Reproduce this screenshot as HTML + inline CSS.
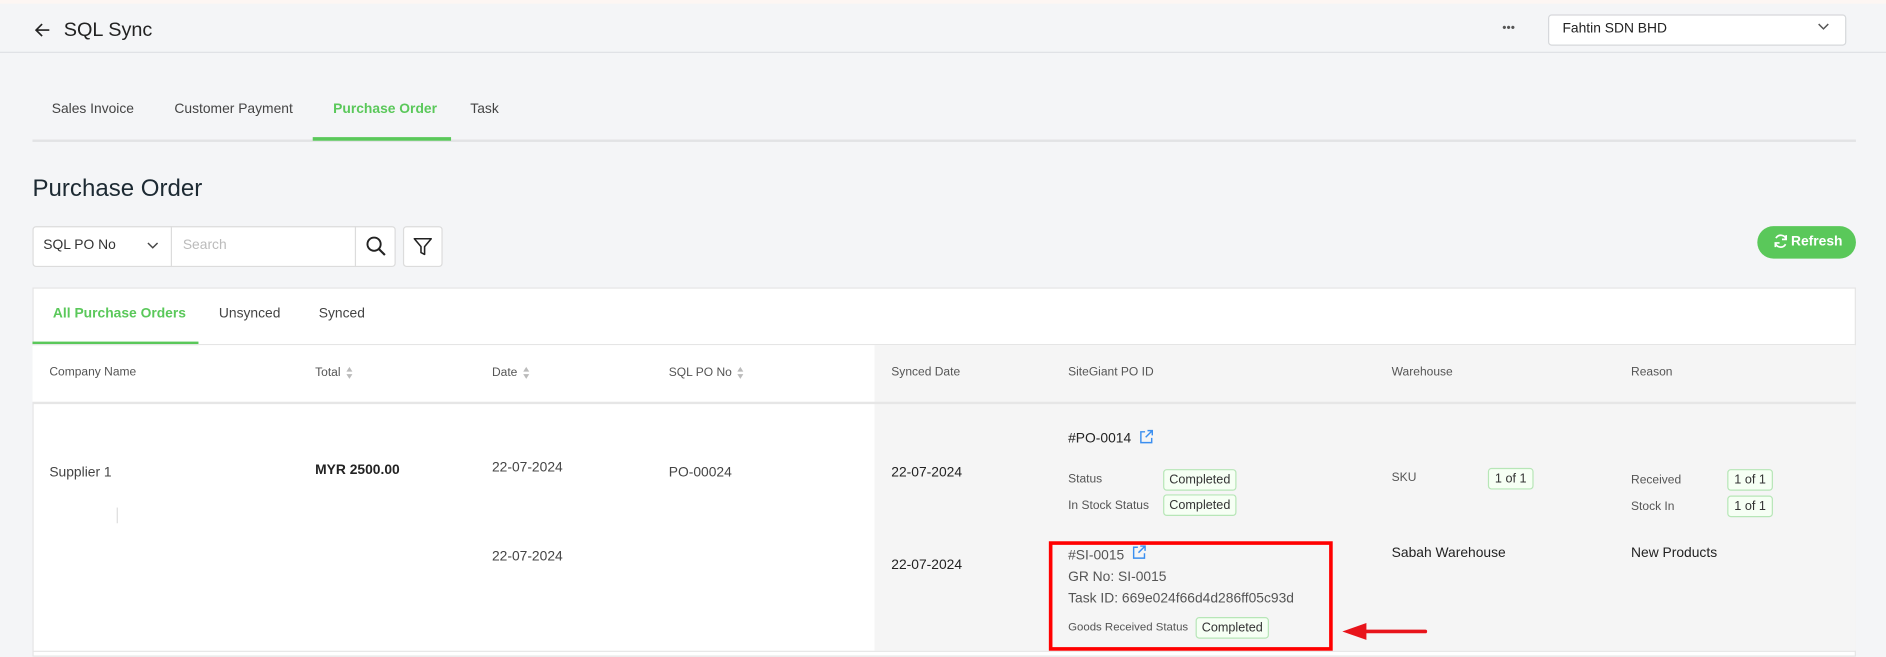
<!DOCTYPE html>
<html><head><meta charset="utf-8"><style>
*{box-sizing:border-box;margin:0;padding:0}
html,body{width:1886px;height:657px;overflow:hidden;background:#f4f5f7}
#w{position:absolute;left:0;top:0;width:1568px;height:546px;transform:scale(1.20281);transform-origin:0 0;font-family:"Liberation Sans",sans-serif;color:#333;background:#f4f5f7}
.a{position:absolute;white-space:nowrap}
.t{font-size:11.5px;color:#444}
.h{font-size:10px;color:#555}
.b{position:absolute;border:1px solid #b7e6b7;background:#f6fff4;border-radius:3px;font-size:10.5px;color:#333;text-align:center;line-height:16px;height:18px}
.s{display:inline-block;vertical-align:middle;margin-left:4px}
</style></head><body><div id="w">
<div class="a" style="left:0;top:0;width:1568px;height:3px;background:#fdf6f3"></div>
<div class="a" style="left:0;top:43px;width:1568px;height:1px;background:#dfe1e4"></div>
<svg class="a" style="left:28px;top:18px" width="14" height="14" viewBox="0 0 14 14"><path d="M13 7H2M7 2L2 7l5 5" fill="none" stroke="#222" stroke-width="1.4"/></svg>
<div class="a" style="left:53px;top:16px;font-size:16.5px;color:#222">SQL Sync</div>
<div class="a" style="left:1249px;top:18px;font-size:10px;color:#555;letter-spacing:0px">•••</div>
<div class="a" style="left:1287px;top:12px;width:248px;height:26px;background:#fff;border:1px solid #d6d8db;border-radius:3px"></div>
<div class="a" style="left:1299px;top:18px;font-size:11.5px;color:#222">Fahtin SDN BHD</div>
<svg class="a" style="left:1511px;top:19px" width="10" height="8"><path d="M1 1l4 4 4-4" fill="none" stroke="#555" stroke-width="1.2"/></svg>

<div class="a t" style="left:43px;top:85px">Sales Invoice</div>
<div class="a t" style="left:145px;top:85px">Customer Payment</div>
<div class="a" style="left:277px;top:85px;font-size:11.5px;color:#5ac85a;font-weight:bold">Purchase Order</div>
<div class="a t" style="left:391px;top:85px">Task</div>
<div class="a" style="left:27px;top:116px;width:1516px;height:2px;background:#e2e3e5"></div>
<div class="a" style="left:260px;top:114px;width:115px;height:3px;background:#5ac85a"></div>

<div class="a" style="left:27px;top:146px;font-size:20px;color:#1d2a33">Purchase Order</div>

<div class="a" style="left:27px;top:188px;width:302px;height:34px;background:#fff;border:1px solid #dcdcdc;border-radius:3px"></div>
<div class="a" style="left:142px;top:188px;width:1px;height:34px;background:#dcdcdc"></div>
<div class="a" style="left:295px;top:188px;width:1px;height:34px;background:#dcdcdc"></div>
<div class="a" style="left:36px;top:198px;font-size:11.5px;color:#333">SQL PO No</div>
<svg class="a" style="left:122px;top:201px" width="10" height="8"><path d="M1 1l4 4 4-4" fill="none" stroke="#444" stroke-width="1.2"/></svg>
<div class="a" style="left:152px;top:198px;font-size:11.5px;color:#bbb">Search</div>
<svg class="a" style="left:304px;top:196px" width="17" height="17" viewBox="0 0 17 17"><circle cx="7" cy="7" r="5.5" fill="none" stroke="#222" stroke-width="1.6"/><path d="M11 11l5 5" stroke="#222" stroke-width="1.8"/></svg>
<div class="a" style="left:335px;top:188px;width:33px;height:34px;background:#fff;border:1px solid #dcdcdc;border-radius:3px"></div>
<svg class="a" style="left:343px;top:197px" width="17" height="16" viewBox="0 0 17 16"><path d="M1.5 1.5h14l-5.5 6.5v6.5l-3-1.5v-5z" fill="none" stroke="#222" stroke-width="1.3" stroke-linejoin="round"/></svg>

<div class="a" style="left:1461px;top:188px;width:82px;height:27px;background:#5ac85a;border-radius:14px"></div>
<svg class="a" style="left:1474px;top:194px" width="13" height="13" viewBox="0 0 13 13"><path d="M11 5A4.6 4.6 0 0 0 2.5 4M2 8a4.6 4.6 0 0 0 8.5 1M11 1.5V5H7.5M2 11.5V8h3.5" fill="none" stroke="#fff" stroke-width="1.4"/></svg>
<div class="a" style="left:1489px;top:195px;font-size:11.5px;color:#fff;font-weight:bold">Refresh</div>

<div class="a" style="left:27px;top:239px;width:1516px;height:307px;background:#fff;border:1px solid #e5e5e5"></div>
<div class="a" style="left:44px;top:255px;font-size:11.5px;color:#5ac85a;font-weight:bold">All Purchase Orders</div>
<div class="a t" style="left:182px;top:255px">Unsynced</div>
<div class="a t" style="left:265px;top:255px">Synced</div>
<div class="a" style="left:27px;top:284px;width:138px;height:3px;background:#5ac85a"></div>
<div class="a" style="left:27px;top:286px;width:1516px;height:1px;background:#e5e5e5"></div>
<div class="a" style="left:727px;top:287px;width:816px;height:254px;background:#f5f5f5"></div>
<div class="a" style="left:27px;top:287px;width:700px;height:48px;background:#fff"></div>
<div class="a" style="left:27px;top:334px;width:1516px;height:2px;background:#e6e6e6"></div>
<div class="a" style="left:27px;top:541px;width:1516px;height:1px;background:#e6e6e6"></div>

<div class="a h" style="left:41px;top:304px">Company Name</div>
<div class="a h" style="left:262px;top:304px">Total<svg class="s" width="7" height="12"><path d="M3.5 1L6 5H1zM3.5 11L6 7H1z" fill="#bbb"/></svg></div>
<div class="a h" style="left:409px;top:304px">Date<svg class="s" width="7" height="12"><path d="M3.5 1L6 5H1zM3.5 11L6 7H1z" fill="#bbb"/></svg></div>
<div class="a h" style="left:556px;top:304px">SQL PO No<svg class="s" width="7" height="12"><path d="M3.5 1L6 5H1zM3.5 11L6 7H1z" fill="#bbb"/></svg></div>
<div class="a h" style="left:741px;top:304px">Synced Date</div>
<div class="a h" style="left:888px;top:304px">SiteGiant PO ID</div>
<div class="a h" style="left:1157px;top:304px">Warehouse</div>
<div class="a h" style="left:1356px;top:304px">Reason</div>

<div class="a t" style="left:41px;top:387px">Supplier 1</div>
<div class="a" style="left:97px;top:422px;width:1px;height:13px;background:#ddd"></div>
<div class="a" style="left:262px;top:385px;font-size:11.5px;font-weight:bold;color:#222">MYR 2500.00</div>
<div class="a t" style="left:409px;top:383px">22-07-2024</div>
<div class="a t" style="left:556px;top:387px">PO-00024</div>
<div class="a" style="left:741px;top:387px;font-size:11.5px;color:#222">22-07-2024</div>

<div class="a" style="left:888px;top:359px;font-size:11.5px;color:#222">#PO-0014</div>
<svg class="a" style="left:947px;top:357px" width="12" height="12" viewBox="0 0 12 12"><path d="M5 2H1.5v9h9V7M7 1h4v4M11 1L5.5 6.5" fill="none" stroke="#3b8ff0" stroke-width="1.2"/></svg>
<div class="a h" style="left:888px;top:393px">Status</div>
<div class="b" style="left:967px;top:390px;width:61px">Completed</div>
<div class="a h" style="left:888px;top:415px">In Stock Status</div>
<div class="b" style="left:967px;top:411px;width:61px">Completed</div>
<div class="a h" style="left:1157px;top:392px">SKU</div>
<div class="b" style="left:1237px;top:389px;width:38px">1 of 1</div>
<div class="a h" style="left:1356px;top:394px">Received</div>
<div class="b" style="left:1436px;top:390px;width:38px">1 of 1</div>
<div class="a h" style="left:1356px;top:416px">Stock In</div>
<div class="b" style="left:1436px;top:412px;width:38px">1 of 1</div>

<div class="a t" style="left:409px;top:457px">22-07-2024</div>
<div class="a" style="left:741px;top:464px;font-size:11.5px;color:#222">22-07-2024</div>
<div class="a" style="left:888px;top:456px;font-size:11.5px;color:#555">#SI-0015</div>
<svg class="a" style="left:941px;top:453px" width="12" height="12" viewBox="0 0 12 12"><path d="M5 2H1.5v9h9V7M7 1h4v4M11 1L5.5 6.5" fill="none" stroke="#3b8ff0" stroke-width="1.2"/></svg>
<div class="a" style="left:888px;top:474px;font-size:11.5px;color:#555">GR No: SI-0015</div>
<div class="a" style="left:888px;top:492px;font-size:11.5px;color:#555">Task ID: 669e024f66d4d286ff05c93d</div>
<div class="a h" style="left:888px;top:516px;font-size:9.5px">Goods Received Status</div>
<div class="b" style="left:994px;top:513px;width:61px">Completed</div>
<div class="a" style="left:1157px;top:454px;font-size:11.5px;color:#222">Sabah Warehouse</div>
<div class="a" style="left:1356px;top:454px;font-size:11.5px;color:#222">New Products</div>

<div class="a" style="left:872px;top:450px;width:236px;height:91px;border:3px solid #f00"></div>
<svg class="a" style="left:1114px;top:517px" width="74" height="16" viewBox="0 0 74 16"><path d="M20 8H71" stroke="#e8141b" stroke-width="3" stroke-linecap="round"/><path d="M2 8L22 1v14z" fill="#e8141b"/></svg>
</div></body></html>
